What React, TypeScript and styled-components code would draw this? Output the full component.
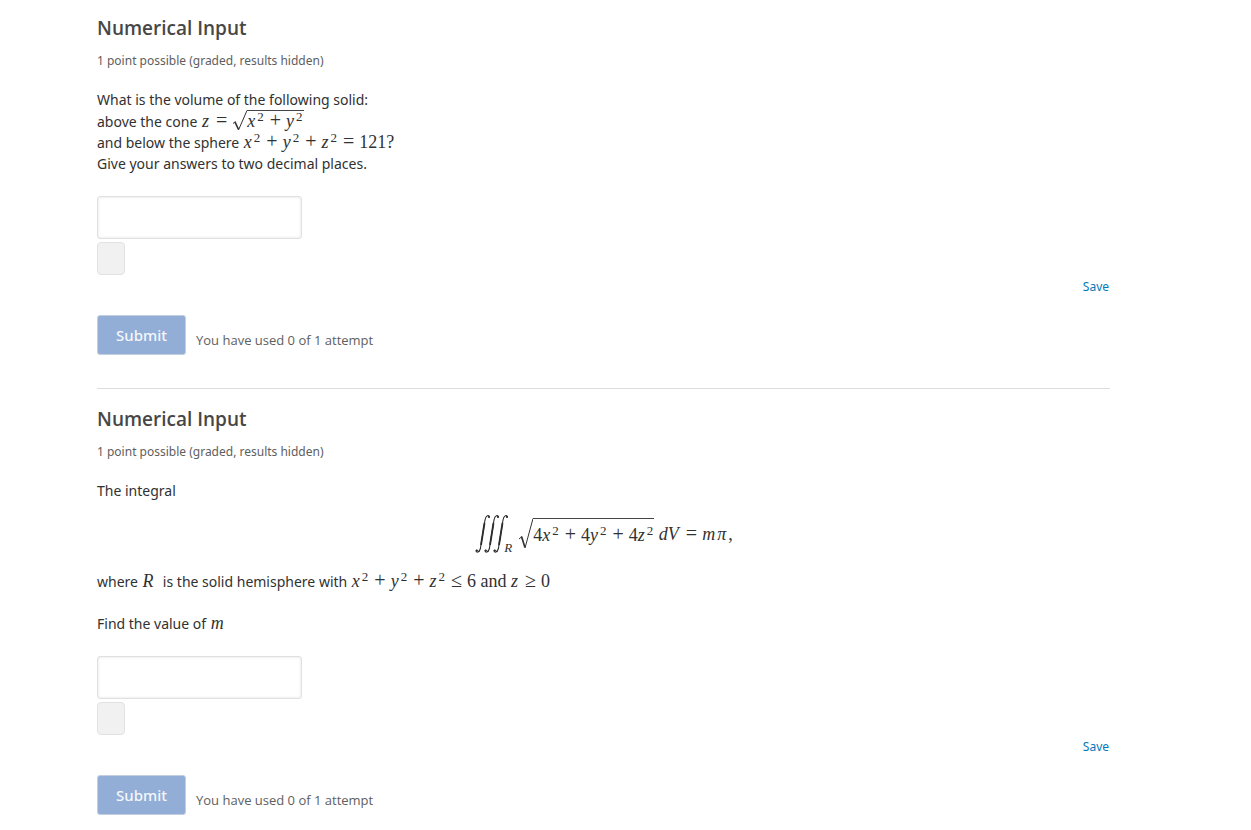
import React from "react";
import styled, { createGlobalStyle } from "styled-components";

const GlobalStyle = createGlobalStyle`
  * { box-sizing: border-box; }
  body {
    margin: 0;
    background: #fff;
    color: #313131;
    font: 14px/21px "Segoe UI", "Noto Sans", sans-serif;
  }
`;

const Page = styled.main`
  padding: 14px 141px 14px 97px;
`;

const Problem = styled.section`
  & + & {
    margin-top: 33px;
    padding-top: 16px;
    border-top: 1px solid #ddd;
  }
`;

const Title = styled.h3`
  margin: 0 0 9px;
  color: #474747;
  font-family: "Segoe UI", "Open Sans", sans-serif;
  font-size: 19px;
  font-weight: 600;
  line-height: 28px;
`;

const Progress = styled.div`
  margin-bottom: 18px;
  color: #5e5e5e;
  font-size: 12px;
  line-height: 20px;
`;

const Line = styled.div<{ $math?: boolean }>`
  height: ${(p) => (p.$math ? 22 : 21)}px;
  white-space: nowrap;
`;

const Paragraph = styled(Line)`
  & + & { margin-top: 21px; }
`;

const Formula = styled.div`
  display: flex;
  justify-content: center;
  align-items: center;
  height: 44px;
  margin: 11px 0 15px;
`;

const Math = styled.span`
  margin-left: 1px;
  font-family: "Liberation Serif", serif;
  font-size: 18px;
  line-height: 20px;
  white-space: nowrap;
`;

const Var = styled.i`
  margin-right: 2px;
`;

const Power = styled.sup`
  margin-right: 1px;
  font-size: 13px;
  line-height: 0;
  vertical-align: 6px;
`;

const Operator = styled.span`
  margin: 0 5px;
  font-size: 20px;
  line-height: 0;
`;

const Root = styled.span`
  display: inline-flex;
  align-items: baseline;
`;

const RootSign = styled.svg<{ $tall?: boolean }>`
  width: 15px;
  height: ${(p) => (p.$tall ? 32 : 21)}px;
  flex: none;
  align-self: flex-start;
`;

const Radicand = styled.span<{ $tall?: boolean }>`
  height: ${(p) => (p.$tall ? 32 : 21)}px;
  padding-top: ${(p) => (p.$tall ? 6 : 0)}px;
  border-top: 1px solid #444;
`;

const Integrals = styled.svg`
  width: 34px;
  height: 40px;
  flex: none;
`;

const Region = styled.i`
  align-self: flex-end;
  margin: 0 6px 0 -5px;
  font-size: 13px;
  line-height: 13px;
`;

const FormulaMath = styled(Math)`
  display: flex;
  align-items: center;
`;

const Answer = styled.div`
  display: flex;
  flex-direction: column;
  align-items: flex-start;
  gap: 3px;
  margin-top: 22px;
`;

const AnswerInput = styled.input`
  width: 205px;
  height: 43px;
  padding: 8px 10px;
  border: 1px solid #e0e0e0;
  border-radius: 3px;
  background: #fff;
  box-shadow: inset 0 0 3px rgba(0, 0, 0, 0.12);
  color: inherit;
  font: inherit;
`;

const Preview = styled.output`
  width: 28px;
  height: 33px;
  border: 1px solid #e2e2e2;
  border-radius: 4px;
  background: #f1f1f1;
`;

const SaveRow = styled.div`
  display: flex;
  justify-content: flex-end;
  margin: 1px 1px 19px 0;
`;

const SaveButton = styled.button`
  padding: 0;
  border: 0;
  background: none;
  color: #0079bc;
  font: inherit;
  font-size: 12px;
  line-height: 21px;
`;

const SubmitRow = styled.div`
  display: flex;
  align-items: flex-end;
  gap: 10px;
`;

const SubmitButton = styled.button`
  width: 89px;
  height: 40px;
  margin-top: -1px;
  padding: 0;
  border: 1px solid #c3cfe1;
  border-radius: 3px;
  background: #92add6;
  color: #f4f7fb;
  font: inherit;
  font-size: 15px;
  font-weight: 500;
`;

const Attempts = styled.span`
  margin-bottom: 5px;
  color: #5e5e5e;
  font-family: "Segoe UI", "Open Sans", sans-serif;
  font-size: 13px;
  line-height: 20px;
`;

const Squared = ({ name }: { name: string }) => (
  <><Var>{name}</Var><Power>2</Power></>
);

const Surd = ({ tall }: { tall?: boolean }) => (
  <RootSign $tall={tall} viewBox={tall ? "0 0 15 32" : "0 0 15 21"} fill="none" stroke="#333" aria-hidden="true">
    <path
      d={tall ? "M1 21 L4 18.500 M7 30 L15 .5" : "M1 13.500 L3.500 11.500 M6.500 20 L15 .5"}
      strokeWidth="1"
    />
    <path d={tall ? "M3.500 18.500 L7 29.500" : "M3 12 L6.500 19.500"} strokeWidth="1.700" />
  </RootSign>
);

const integralPath =
  "M1 36.500 C1 38.800 4.300 39.100 5.400 34.500 L10 6 C10.800 1 14 .5 14.500 3";

const TripleIntegral = () => (
  <Integrals viewBox="0 0 34 40" fill="none" stroke="#2c2c2c" role="img" aria-label="triple integral">
    {[0, 9, 18].map((x) => (
      <g key={x} transform={`translate(${x} 0)`}>
        <path d={integralPath} strokeWidth="1.100" />
        <path d="M6 31 L9.500 9" strokeWidth="1.800" />
        <circle cx="1.800" cy="36.500" r=".7" fill="#2c2c2c" />
        <circle cx="14" cy="3" r=".7" fill="#2c2c2c" />
      </g>
    ))}
  </Integrals>
);

const Controls = ({ id }: { id: string }) => (
  <>
    <Answer>
      <AnswerInput id={id} type="text" aria-label="Answer" />
      <Preview htmlFor={id} />
    </Answer>
    <SaveRow><SaveButton type="button">Save</SaveButton></SaveRow>
    <SubmitRow>
      <SubmitButton type="button" disabled>Submit</SubmitButton>
      <Attempts>You have used 0 of 1 attempt</Attempts>
    </SubmitRow>
  </>
);

const Header = () => (
  <>
    <Title>Numerical Input</Title>
    <Progress>1 point possible (graded, results hidden)</Progress>
  </>
);

export default function App() {
  return (
    <>
      <GlobalStyle />
      <Page>
        <Problem>
          <Header />
          <Line>What is the volume of the following solid:</Line>
          <Line $math>
            above the cone{" "}
            <Math>
              <Var>z</Var><Operator>=</Operator>
              <Root>
                <Surd />
                <Radicand><Squared name="x" /><Operator>+</Operator><Squared name="y" /></Radicand>
              </Root>
            </Math>
          </Line>
          <Line>
            and below the sphere{" "}
            <Math>
              <Squared name="x" /><Operator>+</Operator><Squared name="y" /><Operator>+</Operator>
              <Squared name="z" /><Operator>=</Operator>121?
            </Math>
          </Line>
          <Line>Give your answers to two decimal places.</Line>
          <Controls id="volume" />
        </Problem>
        <Problem>
          <Header />
          <Paragraph>The integral</Paragraph>
          <Formula>
            <FormulaMath>
              <TripleIntegral />
              <Region>R</Region>
              <Root>
                <Surd tall />
                <Radicand $tall>
                  4<Squared name="x" /><Operator>+</Operator>4<Squared name="y" /><Operator>+</Operator>4<Squared name="z" />
                </Radicand>
              </Root>
              <span>
                &nbsp;<Var>dV</Var><Operator>=</Operator><Var>m</Var><Var>π</Var>,
              </span>
            </FormulaMath>
          </Formula>
          <Paragraph>
            where <Math><Var>R</Var></Math>&nbsp; is the solid hemisphere with{" "}
            <Math>
              <Squared name="x" /><Operator>+</Operator><Squared name="y" /><Operator>+</Operator>
              <Squared name="z" /><Operator>≤</Operator>6 and <Var>z</Var><Operator>≥</Operator>0
            </Math>
          </Paragraph>
          <Paragraph>
            Find the value of <Math><Var>m</Var></Math>
          </Paragraph>
          <Controls id="coefficient" />
        </Problem>
      </Page>
    </>
  );
}
